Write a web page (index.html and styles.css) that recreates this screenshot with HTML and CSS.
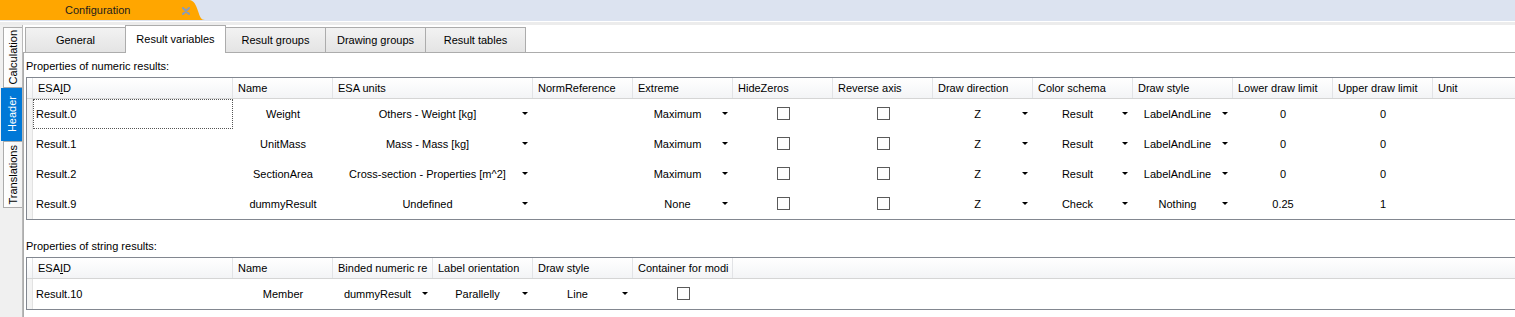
FILE: index.html
```html
<!DOCTYPE html>
<html>
<head>
<meta charset="utf-8">
<link rel="stylesheet" href="styles.css">
</head>
<body>
<div class="doctabs">
  <div class="doctab">
    <span>Configuration</span>
    <svg class="close" width="8" height="8" viewBox="0 0 8 8"><path d="M1 1 L7 7 M7 1 L1 7" stroke="#8e9bb0" stroke-width="2.2" stroke-linecap="round"/></svg>
  </div>
</div>
<div class="sep"></div>
<div class="main">
  <div class="side">
    <div class="vtab calc"><span>Calculation</span></div>
    <div class="vtab head active"><span>Header</span></div>
    <div class="vtab trans"><span>Translations</span></div>
  </div>
  <div class="content">
    <div class="tabs">
      <div class="tab">General</div>
      <div class="tab selected">Result variables</div>
      <div class="tab">Result groups</div>
      <div class="tab">Drawing groups</div>
      <div class="tab">Result tables</div>
    </div>
    <div class="panel">
      <div class="label">Properties of numeric results:</div>
      <div class="grid g1">
        <div class="hrow">
          <div class="hc rh"></div>
          <div class="hc">ESA<u>I</u>D</div>
          <div class="hc">Name</div>
          <div class="hc">ESA units</div>
          <div class="hc">NormReference</div>
          <div class="hc">Extreme</div>
          <div class="hc">HideZeros</div>
          <div class="hc">Reverse axis</div>
          <div class="hc">Draw direction</div>
          <div class="hc">Color schema</div>
          <div class="hc">Draw style</div>
          <div class="hc">Lower draw limit</div>
          <div class="hc">Upper draw limit</div>
          <div class="hc fill">Unit</div>
        </div>
        <div class="brow">
          <div class="c rh"></div>
          <div class="c l focus">Result.0</div>
          <div class="c ctr">Weight</div>
          <div class="c dd"><span class="v">Others - Weight [kg]</span><span class="ar"></span></div>
          <div class="c"></div>
          <div class="c dd"><span class="v">Maximum</span><span class="ar"></span></div>
          <div class="c ctr"><span class="cb"></span></div>
          <div class="c ctr"><span class="cb"></span></div>
          <div class="c dd"><span class="v">Z</span><span class="ar"></span></div>
          <div class="c dd"><span class="v">Result</span><span class="ar"></span></div>
          <div class="c dd"><span class="v">LabelAndLine</span><span class="ar"></span></div>
          <div class="c ctr">0</div>
          <div class="c ctr">0</div>
          <div class="c"></div>
        </div>
        <div class="brow">
          <div class="c rh"></div>
          <div class="c l">Result.1</div>
          <div class="c ctr">UnitMass</div>
          <div class="c dd"><span class="v">Mass - Mass [kg]</span><span class="ar"></span></div>
          <div class="c"></div>
          <div class="c dd"><span class="v">Maximum</span><span class="ar"></span></div>
          <div class="c ctr"><span class="cb"></span></div>
          <div class="c ctr"><span class="cb"></span></div>
          <div class="c dd"><span class="v">Z</span><span class="ar"></span></div>
          <div class="c dd"><span class="v">Result</span><span class="ar"></span></div>
          <div class="c dd"><span class="v">LabelAndLine</span><span class="ar"></span></div>
          <div class="c ctr">0</div>
          <div class="c ctr">0</div>
          <div class="c"></div>
        </div>
        <div class="brow">
          <div class="c rh"></div>
          <div class="c l">Result.2</div>
          <div class="c ctr">SectionArea</div>
          <div class="c dd"><span class="v">Cross-section - Properties [m^2]</span><span class="ar"></span></div>
          <div class="c"></div>
          <div class="c dd"><span class="v">Maximum</span><span class="ar"></span></div>
          <div class="c ctr"><span class="cb"></span></div>
          <div class="c ctr"><span class="cb"></span></div>
          <div class="c dd"><span class="v">Z</span><span class="ar"></span></div>
          <div class="c dd"><span class="v">Result</span><span class="ar"></span></div>
          <div class="c dd"><span class="v">LabelAndLine</span><span class="ar"></span></div>
          <div class="c ctr">0</div>
          <div class="c ctr">0</div>
          <div class="c"></div>
        </div>
        <div class="brow">
          <div class="c rh"></div>
          <div class="c l">Result.9</div>
          <div class="c ctr">dummyResult</div>
          <div class="c dd"><span class="v">Undefined</span><span class="ar"></span></div>
          <div class="c"></div>
          <div class="c dd"><span class="v">None</span><span class="ar"></span></div>
          <div class="c ctr"><span class="cb"></span></div>
          <div class="c ctr"><span class="cb"></span></div>
          <div class="c dd"><span class="v">Z</span><span class="ar"></span></div>
          <div class="c dd"><span class="v">Check</span><span class="ar"></span></div>
          <div class="c dd"><span class="v">Nothing</span><span class="ar"></span></div>
          <div class="c ctr">0.25</div>
          <div class="c ctr">1</div>
          <div class="c"></div>
        </div>
      </div>
      <div class="label l2">Properties of string results:</div>
      <div class="grid g2">
        <div class="hrow">
          <div class="hc rh"></div>
          <div class="hc">ESA<u>I</u>D</div>
          <div class="hc">Name</div>
          <div class="hc">Binded numeric re</div>
          <div class="hc">Label orientation</div>
          <div class="hc">Draw style</div>
          <div class="hc">Container for modi</div>
          <div class="hc fill"></div>
        </div>
        <div class="brow">
          <div class="c rh"></div>
          <div class="c l">Result.10</div>
          <div class="c ctr">Member</div>
          <div class="c dd"><span class="v">dummyResult</span><span class="ar"></span></div>
          <div class="c dd"><span class="v">Parallelly</span><span class="ar"></span></div>
          <div class="c dd"><span class="v">Line</span><span class="ar"></span></div>
          <div class="c ctr"><span class="cb"></span></div>
          <div class="c"></div>
        </div>
      </div>
    </div>
  </div>
</div>
</body>
</html>
```
FILE: styles.css
```css
html, body {
  margin: 0;
  padding: 0;
}
body {
  width: 1515px;
  height: 317px;
  overflow: hidden;
  font-family: "Liberation Sans", Arial, sans-serif;
  font-size: 11px;
  color: #000;
  background: #fff;
}

.doctabs {
  height: 21px;
  background: #dce3f0;
}
.doctab {
  width: 205px;
  height: 20px;
  box-sizing: border-box;
  padding-left: 65px;
  background: #ffa600;
  clip-path: path('M0 0 H189 C194 0 196 5 198 11 C200 17 201 20 205 20 H0 Z');
  display: flex;
  align-items: center;
  color: #1c1c1c;
}
.close {
  margin-left: 52px;
  margin-top: 1px;
}
.sep {
  height: 3px;
  border-top: 1px solid #fff;
  background: #ececec;
}

.main {
  display: flex;
  height: 292px;
}
.side {
  width: 22px;
  flex: none;
  background: #f0f0f0;
  border-right: 1px solid #b9b9b9;
  padding-top: 2px;
  display: flex;
  flex-direction: column;
  align-items: flex-end;
}
.vtab {
  width: 19px;
  box-sizing: border-box;
  border: 1px solid #acacac;
  border-right: none;
  background: linear-gradient(to right, #ffffff, #f4f4f4);
  display: flex;
  align-items: center;
  justify-content: center;
}
.vtab span {
  writing-mode: vertical-rl;
  transform: rotate(180deg);
  white-space: nowrap;
}
.vtab.calc { height: 61px; }
.vtab.head { height: 53px; }
.vtab.trans { height: 67px; }
.vtab.active {
  width: 21px;
  background: #0078d7;
  border-color: #0078d7;
  color: #fff;
}

.content {
  flex: 1;
  min-width: 0;
  display: flex;
  flex-direction: column;
}
.tabs {
  height: 27px;
  flex: none;
  display: flex;
  align-items: flex-end;
  padding-left: 2px;
}
.tab {
  width: 101px;
  height: 25px;
  box-sizing: border-box;
  margin-right: -1px;
  border: 1px solid #acacac;
  border-bottom: none;
  background: linear-gradient(#f2f2f2, #e4e4e4);
  display: flex;
  align-items: center;
  justify-content: center;
}
.tab.selected {
  height: 28px;
  margin-bottom: -1px;
  background: #fff;
  position: relative;
  z-index: 1;
  padding-bottom: 2px;
}
.panel {
  flex: 1;
  min-width: 0;
  overflow: hidden;
  border-top: 1px solid #acacac;
  border-left: 1px solid #acacac;
  padding: 7px 0 0 2px;
}
.label {
  height: 13px;
  line-height: 13px;
  margin-bottom: 4px;
  white-space: nowrap;
}
.label.l2 {
  margin-top: 20px;
}

.grid {
  border: 1px solid #828790;
  border-right: none;
}
.g1 .hrow, .g1 .brow {
  display: grid;
  grid-template-columns: 6px 200px 100px 200px repeat(9, 100px) 1fr;
}
.g2 .hrow, .g2 .brow {
  display: grid;
  grid-template-columns: 6px 200px 100px 100px 100px 100px 100px 1fr;
}
.hrow {
  height: 21px;
  box-sizing: border-box;
  border-bottom: 1px solid #d5d5d5;
  background: linear-gradient(#ffffff, #f3f4f6);
}
.hc {
  line-height: 20px;
  padding-left: 5px;
  box-sizing: border-box;
  border-right: 1px solid #e2e3e6;
  white-space: nowrap;
  overflow: hidden;
}
.hc.rh {
  padding: 0;
}
.hc.fill {
  border-right: none;
}
.brow {
  height: 30px;
}
.c {
  height: 30px;
  box-sizing: border-box;
  display: flex;
  align-items: center;
  white-space: nowrap;
  overflow: hidden;
}
.c.rh {
  background: #f3f3f3;
  border-right: 1px solid #e2e2e2;
}
.c.l {
  padding-left: 3px;
}
.c.ctr {
  justify-content: center;
}
.c.focus {
  outline: 1px dotted #555;
  outline-offset: -1px;
}
.c.dd .v {
  flex: 1;
  text-align: center;
}
.ar {
  width: 0;
  height: 0;
  border-left: 3px solid transparent;
  border-right: 3px solid transparent;
  border-top: 3px solid #000;
  margin-right: 5px;
  margin-top: -2px;
}
.cb {
  width: 13px;
  height: 13px;
  box-sizing: border-box;
  border: 1px solid #5a5a5a;
  background: #fff;
  margin-top: -1px;
}
```
